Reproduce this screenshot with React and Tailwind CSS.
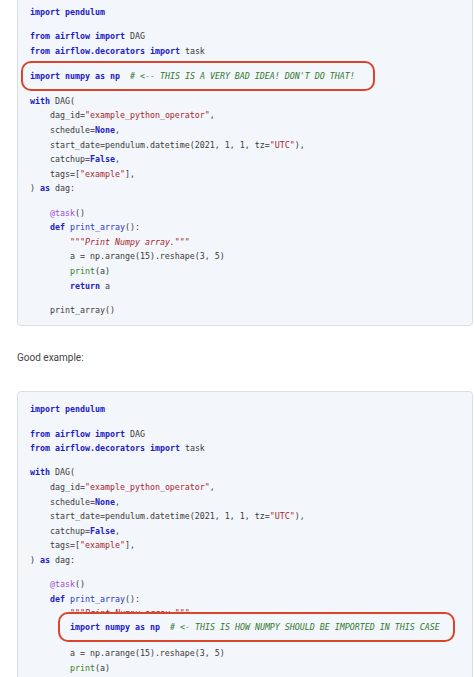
import React from "react"

// token helpers for the highlighted python
const K = ({ children }) => <span className="font-bold text-[#2020c8]">{children}</span>
const F = ({ children }) => <span className="text-[#2b36cc]">{children}</span>
const S = ({ children }) => <span className="text-[#a8262c]">{children}</span>
const D = ({ children }) => <span className="text-[#9d4fd8]">{children}</span>
const B = ({ children }) => <span className="text-[#3b7d20]">{children}</span>
const C = ({ children }) => <span className="italic text-[#2f7a2c]">{children}</span>
const Doc = ({ children }) => <span className="italic text-[#a8262c]">{children}</span>

const Line = ({ children }) => (
    <div className="h-[14.6px] leading-[14.6px] whitespace-pre">{children}</div>
)
const Blank = () => <div className="h-[9.6px]" />

const Header = () => (
    <>
        <Line><K>import</K> <K>pendulum</K></Line>
        <Blank />
        <Line><K>from</K> <K>airflow</K> <K>import</K> DAG</Line>
        <Line><K>from</K> <K>airflow.decorators</K> <K>import</K> task</Line>
    </>
)

const DagBlock = () => (
    <>
        <Line><K>with</K> DAG(</Line>
        <Line>    dag_id=<S>"example_python_operator"</S>,</Line>
        <Line>    schedule=<K>None</K>,</Line>
        <Line>    start_date=pendulum.datetime(2021, 1, 1, tz=<S>"UTC"</S>),</Line>
        <Line>    catchup=<K>False</K>,</Line>
        <Line>    tags=[<S>"example"</S>],</Line>
        <Line>) <K>as</K> dag:</Line>
        <Blank />
        <Line>    <D>@task</D>()</Line>
        <Line>    <K>def</K> <F>print_array</F>():</Line>
    </>
)

const CodeBox = ({ children, extra }) => (
    <div className={`border border-[#d9dee5] rounded-[4px] bg-[#f3f6fb] pl-[12px] pt-[10px] pb-[8px] text-[#3a3a3a] font-['DejaVu_Sans_Mono',monospace] text-[8.3px] ${extra}`}>
        {children}
    </div>
)

export default function App() {
    return (
        <div className="bg-white h-[677px] pl-[17px] pr-[1px] overflow-hidden">
            <CodeBox extra="mt-[-6px]">
                <Header />
                <div className="mt-[3px] mb-[2.5px] ml-[-9px] w-[354px] h-[30px] flex items-center pl-[7px] border-2 border-[#d8452a] rounded-[10px]">
                    <span className="whitespace-pre">
                        <K>import</K> <K>numpy</K> <K>as</K> <K>np</K>{"  "}<C># &lt;-- THIS IS A VERY BAD IDEA! DON'T DO THAT!</C>
                    </span>
                </div>
                <DagBlock />
                <Line>        <Doc>"""Print Numpy array."""</Doc></Line>
                <Line>        a = np.arange(15).reshape(3, 5)</Line>
                <Line>        <B>print</B>(a)</Line>
                <Line>        <K>return</K> a</Line>
                <Blank />
                <Line>    print_array()</Line>
            </CodeBox>

            <p className="mt-[24px] mb-[25px] h-[16px] leading-[16px] text-[10px] text-[#444] font-['Roboto',sans-serif]">
                Good example:
            </p>

            <CodeBox extra="">
                <Header />
                <Blank />
                <DagBlock />
                <Line>        <Doc>"""Print Numpy array."""</Doc></Line>
                <div className="relative mt-[-9px] mb-[4.5px] ml-[28px] w-[397px] h-[30px] flex items-center pl-[10px] bg-[#f3f6fb] border-2 border-[#d8452a] rounded-[10px]">
                    <span className="whitespace-pre">
                        <K>import</K> <K>numpy</K> <K>as</K> <K>np</K>{"  "}<C># &lt;- THIS IS HOW NUMPY SHOULD BE IMPORTED IN THIS CASE</C>
                    </span>
                </div>
                <Line>        a = np.arange(15).reshape(3, 5)</Line>
                <Line>        <B>print</B>(a)</Line>
            </CodeBox>
        </div>
    )
}
